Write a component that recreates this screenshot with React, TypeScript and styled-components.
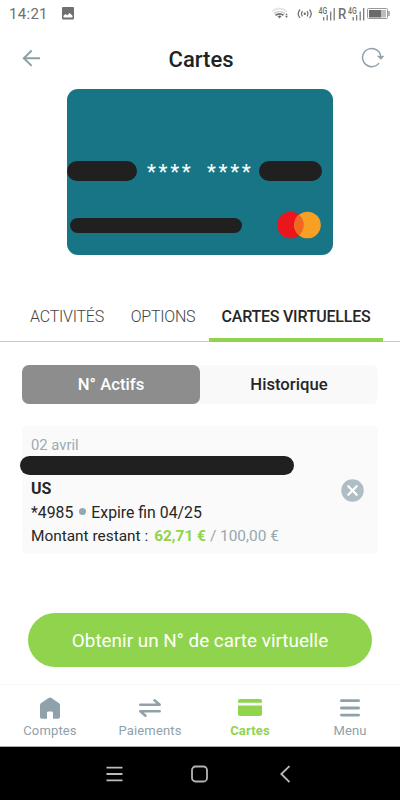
import React from "react";
import styled, { createGlobalStyle } from "styled-components";

const green = "#8fd44c";
const slate = "#8fa1aa";
const ink = "#262626";

const GlobalStyle = createGlobalStyle`
  * { box-sizing: border-box; }
  body { margin: 0; background: #fff; font-family: Roboto, sans-serif; }
  button { font: inherit; border: 0; padding: 0; background: none; color: inherit; }
  svg { display: block; flex: none; overflow: visible; }
`;

const Screen = styled.div`
  width: 400px;
  height: 800px;
  display: flex;
  flex-direction: column;
  overflow: hidden;
  background: #fff;
  color: ${ink};
`;

const StatusBar = styled.div`
  height: 28px;
  display: flex;
  align-items: center;
  justify-content: space-between;
  padding: 0 9px;
  color: #707070;
`;

const StatusLeft = styled.div`
  display: flex;
  align-items: center;
  gap: 15px;
  font-size: 15px;
  line-height: 28px;
`;

const Clock = styled.span`
  width: 38px;
  letter-spacing: 0.3px;
  white-space: nowrap;
`;

const Header = styled.header`
  height: 61px;
  display: flex;
  align-items: center;
  justify-content: space-between;
  padding: 0 16px 0 22px;
`;

const Title = styled.h1`
  margin: 2px 0 0;
  font-size: 22px;
  line-height: 28px;
  font-weight: 500;
  color: #222;
`;

const BankCard = styled.section`
  width: 266px;
  height: 166px;
  margin: 0 auto;
  padding-top: 72px;
  border-radius: 11px;
  background: #177586;
`;

const NumberRow = styled.div`
  display: flex;
  height: 20px;
`;

const Stars = styled.span<{ $before: number; $width: number }>`
  width: ${(p) => p.$width}px;
  margin-left: ${(p) => p.$before}px;
  font-size: 20px;
  line-height: 22px;
  letter-spacing: 2.7px;
  font-weight: 500;
  color: #f4fafb;
  white-space: nowrap;
`;

const Redaction = styled.span<{ $w: number; $h: number }>`
  display: block;
  flex: none;
  width: ${(p) => p.$w}px;
  height: ${(p) => p.$h}px;
  border-radius: ${(p) => p.$h / 2}px;
  background: #202020;
`;

const HolderRow = styled.div`
  display: flex;
  align-items: center;
  justify-content: space-between;
  margin-top: 30px;
  padding: 0 12px 0 3px;
`;

const Tabs = styled.nav`
  height: 51px;
  margin-top: 36px;
  padding-left: 17px;
  display: flex;
  box-shadow: inset 0 -1px #c9c9c9;
`;

const Tab = styled.button<{ $active?: boolean; $width: number }>`
  width: ${(p) => p.$width}px;
  padding-top: ${(p) => (p.$active ? 3 : 0)}px;
  padding-bottom: ${(p) => (p.$active ? 0 : 1)}px;
  border-bottom: ${(p) => (p.$active ? `4px solid ${green}` : "0")};
  font-size: 16px;
  letter-spacing: -0.22px;
  font-weight: ${(p) => (p.$active ? 500 : 300)};
  color: ${(p) => (p.$active ? ink : "#444")};
  white-space: nowrap;
`;

const Segment = styled.div`
  width: 356px;
  height: 39px;
  margin: 22.5px auto 0;
  display: grid;
  grid-template-columns: 1fr 1fr;
  border-radius: 7px;
  background: #f9f9f9;
`;

const SegmentItem = styled.button<{ $active?: boolean }>`
  padding-top: 1px;
  border-radius: 7px;
  background: ${(p) => (p.$active ? "#8d8d8d" : "transparent")};
  color: ${(p) => (p.$active ? "#fff" : ink)};
  font-size: 16.7px;
  font-weight: 500;
`;

const VirtualCard = styled.article`
  width: 356px;
  height: 128px;
  margin: 22.5px auto 0;
  padding: 9px 14px 0 9px;
  display: flex;
  justify-content: space-between;
  border-radius: 5px;
  background: #fafafa;
`;

const Details = styled.div`
  font-size: 15.8px;
  line-height: 24px;
  white-space: nowrap;
`;

const DateLine = styled.div`
  height: 21px;
  font-size: 14.8px;
  line-height: 21px;
  color: #9aabb3;
`;

const NameMask = styled.div`
  margin: 0 0 2px -11px;
`;

const Merchant = styled.div`
  line-height: 23px;
  font-size: 16px;
  font-weight: 700;
`;

const Expiry = styled.div`
  display: flex;
  align-items: center;
  height: 24px;
  padding-top: 1px;
`;

const Dot = styled.i`
  width: 7px;
  height: 7px;
  margin: -2px 5px 0 6px;
  border-radius: 50%;
  background: #93a7b1;
`;

const Balance = styled.div`
  display: flex;
  font-size: 15.4px;
`;

const Remaining = styled.strong`
  margin: 0 4px 0 6px;
  font-weight: 700;
  color: ${green};
`;

const Limit = styled.span`
  color: #97a7af;
`;

const CloseButton = styled.button`
  align-self: flex-start;
  margin-top: 43.5px;
`;

const PrimaryButton = styled.button`
  width: 344px;
  height: 54px;
  margin: 59px auto 0;
  border-radius: 27px;
  background: ${green};
  color: #fff;
  font-size: 18.9px;
`;

const BottomNav = styled.nav`
  height: 63px;
  margin-top: 17px;
  display: grid;
  grid-template-columns: repeat(4, 1fr);
  border-top: 1px solid #f8f8f8;
  border-bottom: 1px solid #a8adae;
`;

const NavItem = styled.button<{ $active?: boolean }>`
  display: flex;
  flex-direction: column;
  align-items: center;
  padding-top: 10px;
  font-size: 13px;
  line-height: 18px;
  letter-spacing: 0.15px;
  font-weight: ${(p) => (p.$active ? 700 : 400)};
  color: ${(p) => (p.$active ? green : slate)};
`;

const NavLabel = styled.span`
  margin-top: 1px;
`;

const SystemBar = styled.footer`
  flex: 1;
  display: flex;
  align-items: center;
  justify-content: center;
  gap: 68.5px;
  padding-right: 1px;
  background: #000;
`;

const PhotoIcon = () => (
  <svg width="12" height="15" viewBox="0 0 12 15">
    <rect width="12" height="12.5" rx="1" fill="#707070" />
    <path d="M1.500 10.500V8.800L3.500 7l1.700 1.300L7.700 6l2.800 2.800v1.700z" fill="#fff" />
  </svg>
);

const SignalIcons = () => (
  <svg width="120" height="28" viewBox="272 0 120 28" fill="none" stroke="#707070">
    <path d="M273 11.500Q280.500 5.500 288 11.500" stroke="#e6e6e6" strokeWidth="1.700" />
    <path d="M275 13.500Q280.500 9.500 286 13.500" stroke="#c4c4c4" strokeWidth="1.200" />
    <path d="M276.500 15.300Q280.500 12.300 284.500 15.300" strokeWidth="1.700" />
    <path d="m278.500 16.200 2 2.300 2-2.300q-2-1.300-4 0z" fill="#707070" stroke="none" />
    <path d="m287.500 13.300 1.300 1.900h-2.600zM287.500 18l1.300-1.900h-2.600z" fill="#707070" stroke="none" />
    <path d="M301 9.500q-3.500 4.200 0 8.400M303.500 11q-2 2.700 0 5.400M310.500 9.500q3.500 4.200 0 8.400M308 11q2 2.700 0 5.400" strokeWidth="1.200" />
    <circle cx="305.800" cy="13.700" r="1.200" fill="#707070" stroke="none" />
    <path d="M324.700 17v3.500M328.200 15v5.500M331.700 11.500v9M335.200 8v12.500" strokeWidth="1.200" />
    <path d="M354.200 17v3.500M357.700 15v5.500M361.200 11.500v9M364.700 8v12.500" strokeWidth="1.200" />
    <g fill="#707070" stroke="none" fontFamily="Roboto">
      <text x="319.500" y="13.500" fontSize="8.600" fontWeight="500" textLength="8.700" lengthAdjust="spacingAndGlyphs">4G</text>
      <text x="349" y="13.500" fontSize="8.600" fontWeight="500" textLength="8.700" lengthAdjust="spacingAndGlyphs">4G</text>
      <text x="339" y="18.500" fontSize="14.500" fontWeight="500" textLength="8.300" lengthAdjust="spacingAndGlyphs">R</text>
    </g>
    <rect x="368.500" y="8.500" width="20" height="10" rx="1" stroke="#999" />
    <path d="M370 10h12v7.500h-12z" fill="#6b6b6b" stroke="none" />
    <path d="M382 10h5v7.500h-5z" fill="#bdbdbd" stroke="none" />
    <path d="M390 11v5" stroke="#999" strokeWidth="1.500" />
  </svg>
);

const BackIcon = () => (
  <svg width="18" height="18" viewBox="0 0 18 18" fill="none" stroke="#8fa1a8" strokeWidth="2">
    <path d="M18 8.200H2M9.700.500 1.800 8.200l7.900 7.700" />
  </svg>
);

const RefreshIcon = () => (
  <svg width="22" height="20" viewBox="0 0 22 20" fill="none" stroke="#8fa1a8" strokeWidth="1.500">
    <path d="M16.900 14.100A9.100 9.100 0 1 1 18.800 8.500" />
    <path d="m15.700 7 3.200 3.300 2.700-3.300-2.700 1z" fill="#8fa1a8" strokeWidth="1" />
  </svg>
);

const MastercardLogo = () => (
  <svg width="44" height="28" viewBox="0 0 44 28">
    <circle cx="13.500" cy="14" r="13.300" fill="#eb151e" />
    <circle cx="30.500" cy="14" r="13.300" fill="#f8a023" />
    <path d="M22 3.800a13.300 13.300 0 0 1 0 20.400 13.300 13.300 0 0 1 0-20.400z" fill="#f06722" />
  </svg>
);

const CloseIcon = () => (
  <svg width="23" height="23" viewBox="0 0 23 23">
    <circle cx="11.500" cy="11.500" r="11.200" fill="#afbdc4" />
    <path d="m7.300 7.300 8.400 8.400m0-8.400-8.400 8.400" stroke="#fff" strokeWidth="2.300" strokeLinecap="round" />
  </svg>
);

const HomeIcon = () => (
  <svg width="24" height="26" viewBox="0 0 24 26">
    <path d="M2 10.200q0-1.200.9-1.900L10.500 2.900q1.500-1 3 0l7.600 5.400q.9.700.9 1.900V22q0 1.800-1.800 1.800h-5.200v-6q0-1.400-1.400-1.400h-3.200q-1.400 0-1.400 1.400v6H3.800Q2 23.800 2 22z" fill={slate} />
  </svg>
);

const TransferIcon = () => (
  <svg width="24" height="26" viewBox="0 0 24 26" fill="none" stroke={slate} strokeWidth="2.500" strokeLinecap="round" strokeLinejoin="round">
    <path d="M2.300 9.700h19.400l-5.200-4.500M21.700 16.300H2.300l5.200 4.500" />
  </svg>
);

const CardIcon = () => (
  <svg width="24" height="26" viewBox="0 0 24 26" fill={green}>
    <path d="M0 7.700V6q0-2 2-2h20q2 0 2 2v1.700zM0 10.600h24V19q0 2-2 2H2q-2 0-2-2z" />
  </svg>
);

const MenuIcon = () => (
  <svg width="24" height="26" viewBox="0 0 24 26" stroke={slate} strokeWidth="2.800" strokeLinecap="round">
    <path d="M3.400 5.700h17.200M3.400 13h17.200M3.400 20.100h17.200" />
  </svg>
);

const RecentsIcon = () => (
  <svg width="17" height="18" viewBox="0 0 17 18" stroke="#bcbcbc" strokeWidth="1.800">
    <path d="M.500 2.700h16M.500 9h16M.500 15.300h16" />
  </svg>
);

const SystemHomeIcon = () => (
  <svg width="17" height="18" viewBox="0 0 17 18" fill="none" stroke="#b4b4b4" strokeWidth="1.800">
    <rect x="1" y="1.500" width="15" height="15" rx="3.500" />
  </svg>
);

const SystemBackIcon = () => (
  <svg width="17" height="18" viewBox="0 0 17 18" fill="none" stroke="#bcbcbc" strokeWidth="1.800">
    <path d="M12.500 1.200 4.300 9l8.200 8.200" />
  </svg>
);

const navigation = [
  { label: "Comptes", Icon: HomeIcon },
  { label: "Paiements", Icon: TransferIcon },
  { label: "Cartes", Icon: CardIcon, active: true },
  { label: "Menu", Icon: MenuIcon },
];

export default function App() {
  return (
    <>
      <GlobalStyle />
      <Screen>
        <StatusBar>
          <StatusLeft>
            <Clock>14:21</Clock>
            <PhotoIcon />
          </StatusLeft>
          <SignalIcons />
        </StatusBar>
        <Header>
          <BackIcon />
          <Title>Cartes</Title>
          <RefreshIcon />
        </Header>
        <BankCard>
          <NumberRow>
            <Redaction $w={70} $h={20} />
            <Stars $before={10} $width={50}>****</Stars>
            <Stars $before={10} $width={52}>****</Stars>
            <Redaction $w={63} $h={20} />
          </NumberRow>
          <HolderRow>
            <Redaction $w={172} $h={15} />
            <MastercardLogo />
          </HolderRow>
        </BankCard>
        <Tabs>
          <Tab $width={100}>ACTIVITÉS</Tab>
          <Tab $width={92}>OPTIONS</Tab>
          <Tab $width={174} $active>CARTES VIRTUELLES</Tab>
        </Tabs>
        <Segment>
          <SegmentItem $active>N° Actifs</SegmentItem>
          <SegmentItem>Historique</SegmentItem>
        </Segment>
        <VirtualCard>
          <Details>
            <DateLine>02 avril</DateLine>
            <NameMask>
              <Redaction $w={274} $h={19} />
            </NameMask>
            <Merchant>US</Merchant>
            <Expiry>
              *4985
              <Dot />
              Expire fin 04/25
            </Expiry>
            <Balance>
              <span>Montant restant :</span>
              <Remaining>62,71 €</Remaining>
              <Limit>/ 100,00 €</Limit>
            </Balance>
          </Details>
          <CloseButton aria-label="Fermer">
            <CloseIcon />
          </CloseButton>
        </VirtualCard>
        <PrimaryButton>Obtenir un N° de carte virtuelle</PrimaryButton>
        <BottomNav>
          {navigation.map(({ label, Icon, active }) => (
            <NavItem key={label} $active={active}>
              <Icon />
              <NavLabel>{label}</NavLabel>
            </NavItem>
          ))}
        </BottomNav>
        <SystemBar>
          <RecentsIcon />
          <SystemHomeIcon />
          <SystemBackIcon />
        </SystemBar>
      </Screen>
    </>
  );
}
